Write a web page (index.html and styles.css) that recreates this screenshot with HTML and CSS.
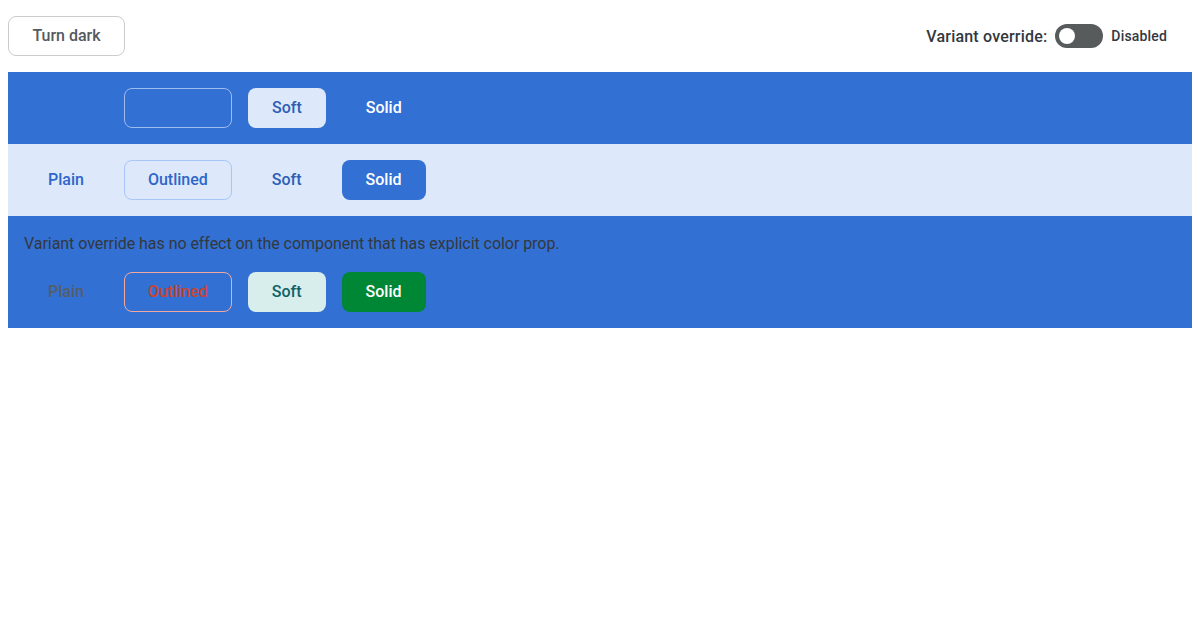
FILE: index.html
```html
<!DOCTYPE html>
<html>
<head>
<meta charset="utf-8">
<link rel="stylesheet" href="styles.css">
</head>
<body>
<div class="top">
  <button class="btn turn">Turn dark</button>
  <div class="override">
    <span class="ov-label">Variant override:</span>
    <span class="switch"><span class="thumb"></span></span>
    <span class="ov-state">Disabled</span>
  </div>
</div>
<div class="row row-solid">
  <button class="btn b-plain w-plain"></button>
  <button class="btn b-out1 w-out"></button>
  <button class="btn b-soft1">Soft</button>
  <button class="btn b-solid1">Solid</button>
</div>
<div class="row row-soft">
  <button class="btn b-plain2">Plain</button>
  <button class="btn b-out2">Outlined</button>
  <button class="btn b-soft2">Soft</button>
  <button class="btn b-solid2">Solid</button>
</div>
<div class="section">
  <p class="note">Variant override has no effect on the component that has explicit color prop.</p>
  <div class="btns">
    <button class="btn b-plain3">Plain</button>
    <button class="btn b-out3">Outlined</button>
    <button class="btn b-soft3">Soft</button>
    <button class="btn b-solid3">Solid</button>
  </div>
</div>
</body>
</html>
```
FILE: styles.css
```css
body {
  margin: 8px;
  font-family: Roboto, "Noto Sans", sans-serif;
  background: #fff;
}
.top {
  display: flex;
  justify-content: space-between;
  align-items: center;
  padding: 8px 0 16px;
}
.btn {
  font-family: Roboto, sans-serif;
  font-size: 16px;
  font-weight: 500;
  height: 40px;
  padding: 0 23px;
  border-radius: 8px;
  border: 1px solid transparent;
  background: transparent;
  box-sizing: border-box;
  line-height: 38px;
  cursor: pointer;
  white-space: nowrap;
}
.turn {
  width: 117px;
  border-color: #c9cdcf;
  color: #555a5e;
  background: #fff;
}
.override {
  display: flex;
  align-items: center;
  margin-right: 25px;
}
.ov-label {
  font-size: 16px;
  font-weight: 500;
  color: #32383e;
  letter-spacing: 0.012em;
}
.switch {
  width: 48px;
  height: 24px;
  border-radius: 12px;
  background: #575b5b;
  margin-left: 8px;
  display: flex;
  align-items: center;
  padding: 0 4px;
  box-sizing: border-box;
}
.thumb {
  width: 16px;
  height: 16px;
  border-radius: 50%;
  background: #fff;
}
.ov-state {
  font-size: 14px;
  font-weight: 500;
  color: #32383e;
  margin-left: 8px;
  letter-spacing: 0.012em;
}
.row {
  display: flex;
  gap: 16px;
  padding: 16px;
}
.row-solid { background: #3370d4; }
.row-soft { background: #dde9fb; }
.w-plain { width: 84px; }
.w-out { width: 108px; }
.b-out1 { border-color: #9dbcf0; }
.b-soft1 { background: #dde9fb; color: #2c5fb6; }
.b-solid1 { color: #fff; }
.b-plain2 { color: #2e66c9; }
.b-out2 { color: #2e66c9; border-color: #a8c5f5; }
.b-soft2 { color: #2c5fb6; }
.b-solid2 { background: #3370d4; color: #fff; }
.section {
  background: #3370d4;
  padding: 16px;
}
.note {
  margin: 0 0 16px;
  font-size: 16px;
  line-height: 24px;
  color: #32383e;
  letter-spacing: -0.05px;
}
.btns {
  display: flex;
  gap: 16px;
}
.b-plain3 { color: #555e68; }
.b-out3 { color: #c9442c; border-color: #f2aaa0; }
.b-soft3 { background: #d7eeed; color: #0e6266; }
.b-solid3 { background: #008736; color: #fff; }
```
